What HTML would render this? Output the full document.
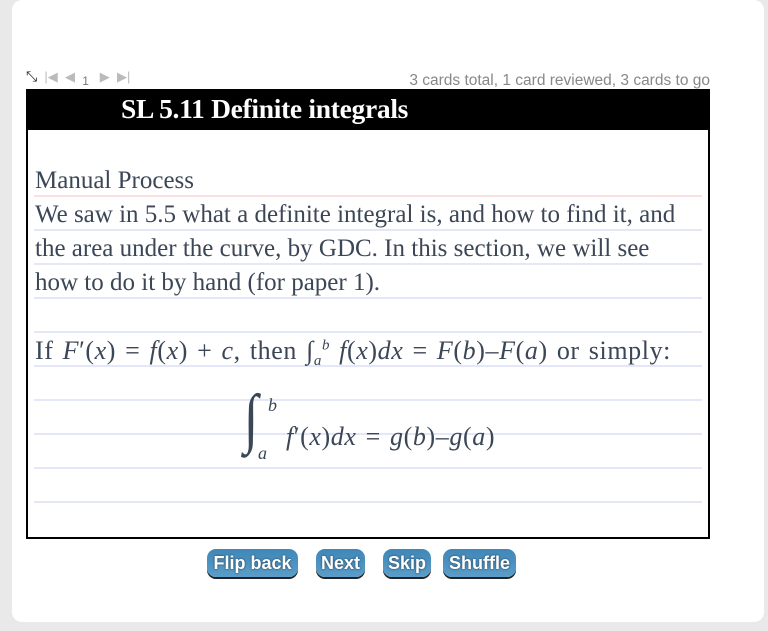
<!DOCTYPE html>
<html><head><style>
html,body{margin:0;padding:0;}
body{width:768px;height:631px;background:#e9e9e9;position:relative;overflow:hidden;font-family:"Liberation Serif",serif;}
.card{position:absolute;left:12px;top:0;width:752px;height:622px;background:#fff;border-radius:10px;}
.nav{position:absolute;left:26px;top:68px;font:13px "Liberation Sans",sans-serif;color:#bbb;}
.stat{position:absolute;right:58px;top:72px;font:15.5px "Liberation Sans",sans-serif;color:#888;}
.box{position:absolute;left:26px;top:89px;width:680px;height:446px;border:2px solid #000;background:#fff;}
.hdr{position:absolute;left:0;top:0;right:0;height:39px;background:#000;color:#fff;font-weight:bold;font-size:27.5px;line-height:36px;padding-left:93px;letter-spacing:-0.3px;}
.ln{position:absolute;left:6px;right:6px;height:2px;background:#e4e6fa;}
.txt{position:absolute;left:7px;font-size:25px;color:#3b4656;white-space:nowrap;}
.m{font-style:italic;}
.btn{position:absolute;top:549px;height:28px;border-radius:9px;background:linear-gradient(#3f87b8,#5a9dc9);box-shadow:0 2px 0 #222;color:#fff;font:bold 18px "Liberation Sans",sans-serif;line-height:28px;text-align:center;text-shadow:0 0 2px #234;}
</style></head><body>
<div class="card"></div>
<div class="nav"><span style="color:#222;font-size:14px">⤡</span>&nbsp; |◀ &nbsp;◀ &nbsp;<span style="color:#777;font-size:12px;position:relative;top:4px">1</span> &nbsp; ▶ &nbsp;▶|</div>
<div class="stat">3 cards total, 1 card reviewed, 3 cards to go</div>
<div class="box">
<div class="hdr">SL 5.11 Definite integrals</div>
<div class="ln" style="top:104px;background:#fae0e0"></div>
<div class="ln" style="top:138px"></div>
<div class="ln" style="top:172px"></div>
<div class="ln" style="top:206px"></div>
<div class="ln" style="top:240px"></div>
<div class="ln" style="top:274px"></div>
<div class="ln" style="top:308px"></div>
<div class="ln" style="top:342px"></div>
<div class="ln" style="top:376px"></div>
<div class="ln" style="top:410px"></div>
<div class="txt" style="top:76px">Manual Process</div>
<div class="txt" style="top:110px">We saw in 5.5 what a definite integral is, and how to find it, and</div>
<div class="txt" style="top:144px">the area under the curve, by GDC. In this section, we will see</div>
<div class="txt" style="top:178px">how to do it by hand (for paper 1).</div>
<div class="txt" style="top:245px;font-size:26px;letter-spacing:0.6px;word-spacing:2px">If <span class="m">F</span>′(<span class="m">x</span>) = <span class="m">f</span>(<span class="m">x</span>) + <span class="m">c</span>, then <span class="m">∫<sub style="font-size:15px">a</sub><sup style="font-size:15px">b</sup></span> <span class="m">f</span>(<span class="m">x</span>)<span class="m">dx</span> = <span class="m">F</span>(<span class="m">b</span>)–<span class="m">F</span>(<span class="m">a</span>) or simply:</div>
<div class="txt" style="top:290px;left:214px;font-size:66px;color:#3b4656;transform:scaleX(0.8)"><span class="m">∫</span></div>
<div class="txt" style="top:304px;left:240px;font-size:18px"><i>b</i></div>
<div class="txt" style="top:352px;left:230px;font-size:18px"><i>a</i></div>
<div class="txt" style="top:331px;left:258px;font-size:26px;letter-spacing:0.6px;word-spacing:2px"><span class="m">f</span>′(<span class="m">x</span>)<span class="m">dx</span> = <span class="m">g</span>(<span class="m">b</span>)–<span class="m">g</span>(<span class="m">a</span>)</div>
</div>
<div class="btn" style="left:207px;width:91px">Flip back</div>
<div class="btn" style="left:316px;width:49px">Next</div>
<div class="btn" style="left:383px;width:48px">Skip</div>
<div class="btn" style="left:443px;width:73px">Shuffle</div>
</body></html>
